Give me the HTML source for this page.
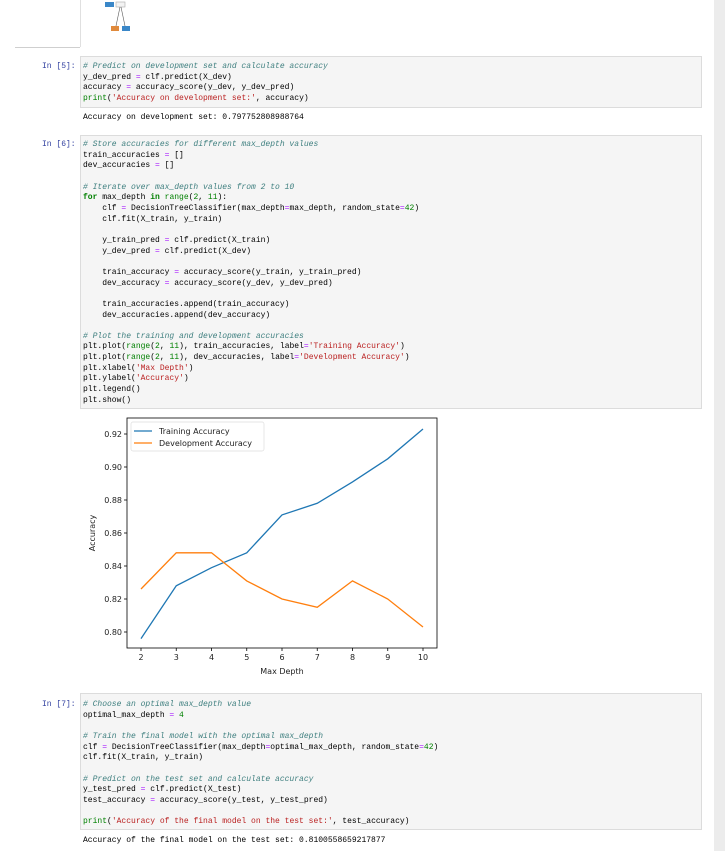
<!DOCTYPE html>
<html><head><meta charset="utf-8"><style>
body{margin:0;width:725px;height:851px;background:#fff;position:relative;overflow:hidden;font-family:"Liberation Mono",monospace;}
.sb{position:absolute;left:714px;top:0;width:11px;height:851px;background:#ececec;}
.box{position:absolute;left:80px;width:620px;background:#f5f5f5;border:1px solid #dcdcdc;}
.code{position:absolute;left:83px;font-size:8px;line-height:10.65px;white-space:pre;color:#000;}
.p{position:absolute;left:42px;font-size:8px;color:#303f9f;}
.out{position:absolute;left:83px;font-size:8px;white-space:pre;color:#000;}
.c{color:#408080;font-style:italic}.k{color:#008000;font-weight:bold}.b{color:#008000}.n{color:#008000}.s{color:#ba2121}.o{color:#aa22ff}
</style></head><body>
<div class="sb"></div>
<div style="position:absolute;left:15px;top:47px;width:65px;height:1px;background:#cfcfcf"></div>
<div style="position:absolute;left:80px;top:0;width:1px;height:47px;background:#e0e0e0"></div>
<svg style="position:absolute;left:100px;top:0" width="40" height="36">
<rect x="5" y="2" width="9" height="5" fill="#3a87c8"/><rect x="16" y="2" width="9" height="5" fill="#f3f3f3" stroke="#aaa" stroke-width=".6"/>
<line x1="20" y1="7" x2="16" y2="26" stroke="#555" stroke-width=".6"/><line x1="21" y1="7" x2="25" y2="26" stroke="#555" stroke-width=".6"/>
<rect x="11" y="26" width="8" height="5" fill="#e08a3c"/><rect x="22" y="26" width="8" height="5" fill="#3a87c8"/></svg>

<div class="box" style="top:56px;height:50px"></div>
<div class="p" style="top:62px">In [5]:</div>
<div class="code" style="top:62px"><span class="c"># Predict on development set and calculate accuracy</span>
y_dev_pred <span class="o">=</span> clf.predict(X_dev)
accuracy <span class="o">=</span> accuracy_score(y_dev, y_dev_pred)
<span class="b">print</span>(<span class="s">'Accuracy on development set:'</span>, accuracy)</div>
<div class="out" style="top:113px">Accuracy on development set: 0.797752808988764</div>

<div class="box" style="top:135px;height:272px"></div>
<div class="p" style="top:140px">In [6]:</div>
<div class="code" style="top:140px"><span class="c"># Store accuracies for different max_depth values</span>
train_accuracies <span class="o">=</span> []
dev_accuracies <span class="o">=</span> []

<span class="c"># Iterate over max_depth values from 2 to 10</span>
<span class="k">for</span> max_depth <span class="k">in</span> <span class="b">range</span>(<span class="n">2</span>, <span class="n">11</span>):
    clf <span class="o">=</span> DecisionTreeClassifier(max_depth<span class="o">=</span>max_depth, random_state<span class="o">=</span><span class="n">42</span>)
    clf.fit(X_train, y_train)

    y_train_pred <span class="o">=</span> clf.predict(X_train)
    y_dev_pred <span class="o">=</span> clf.predict(X_dev)

    train_accuracy <span class="o">=</span> accuracy_score(y_train, y_train_pred)
    dev_accuracy <span class="o">=</span> accuracy_score(y_dev, y_dev_pred)

    train_accuracies.append(train_accuracy)
    dev_accuracies.append(dev_accuracy)

<span class="c"># Plot the training and development accuracies</span>
plt.plot(<span class="b">range</span>(<span class="n">2</span>, <span class="n">11</span>), train_accuracies, label<span class="o">=</span><span class="s">'Training Accuracy'</span>)
plt.plot(<span class="b">range</span>(<span class="n">2</span>, <span class="n">11</span>), dev_accuracies, label<span class="o">=</span><span class="s">'Development Accuracy'</span>)
plt.xlabel(<span class="s">'Max Depth'</span>)
plt.ylabel(<span class="s">'Accuracy'</span>)
plt.legend()
plt.show()</div>

<svg style="position:absolute;left:0;top:410px" width="460" height="280" font-family="DejaVu Sans, sans-serif" font-size="8">
<g transform="translate(0,-410)">
<rect x="127" y="418" width="310" height="230" fill="none" stroke="#000" stroke-width=".8"/>
<g stroke="#000" stroke-width=".8">
<line x1="124" y1="434" x2="127" y2="434"/><line x1="124" y1="467" x2="127" y2="467"/><line x1="124" y1="500" x2="127" y2="500"/><line x1="124" y1="533" x2="127" y2="533"/><line x1="124" y1="566" x2="127" y2="566"/><line x1="124" y1="599" x2="127" y2="599"/><line x1="124" y1="632" x2="127" y2="632"/>
<line x1="141" y1="648" x2="141" y2="651"/><line x1="176.25" y1="648" x2="176.25" y2="651"/><line x1="211.5" y1="648" x2="211.5" y2="651"/><line x1="246.75" y1="648" x2="246.75" y2="651"/><line x1="282" y1="648" x2="282" y2="651"/><line x1="317.25" y1="648" x2="317.25" y2="651"/><line x1="352.5" y1="648" x2="352.5" y2="651"/><line x1="387.75" y1="648" x2="387.75" y2="651"/><line x1="423" y1="648" x2="423" y2="651"/>
</g>
<g text-anchor="end" fill="#222">
<text x="122" y="437">0.92</text><text x="122" y="470">0.90</text><text x="122" y="503">0.88</text><text x="122" y="536">0.86</text><text x="122" y="569">0.84</text><text x="122" y="602">0.82</text><text x="122" y="635">0.80</text></g>
<g text-anchor="middle" fill="#222">
<text x="141" y="660">2</text><text x="176.25" y="660">3</text><text x="211.5" y="660">4</text><text x="246.75" y="660">5</text><text x="282" y="660">6</text><text x="317.25" y="660">7</text><text x="352.5" y="660">8</text><text x="387.75" y="660">9</text><text x="423" y="660">10</text>
<text x="282" y="674">Max Depth</text>
<text transform="translate(95,533) rotate(-90)">Accuracy</text></g>
<polyline fill="none" stroke="#1f77b4" stroke-width="1.3" points="141,638.6 176.25,585.8 211.5,567.7 246.75,552.8 282,514.9 317.25,503.3 352.5,481.9 387.75,458.8 423,429"/>
<polyline fill="none" stroke="#ff7f0e" stroke-width="1.3" points="141,589 176.25,552.8 211.5,552.8 246.75,580.9 282,599 317.25,607.3 352.5,580.9 387.75,599 423,627"/>
<rect x="131" y="422" width="133" height="29" fill="#fff" stroke="#ddd" stroke-width=".7" rx="2"/>
<line x1="134" y1="431" x2="152" y2="431" stroke="#1f77b4" stroke-width="1.3"/>
<line x1="134" y1="443" x2="152" y2="443" stroke="#ff7f0e" stroke-width="1.3"/>
<text x="159" y="434" fill="#222">Training Accuracy</text>
<text x="159" y="446" fill="#222">Development Accuracy</text>
</g></svg>

<div class="box" style="top:693px;height:135px"></div>
<div class="p" style="top:700px">In [7]:</div>
<div class="code" style="top:700px"><span class="c"># Choose an optimal max_depth value</span>
optimal_max_depth <span class="o">=</span> <span class="n">4</span>

<span class="c"># Train the final model with the optimal max_depth</span>
clf <span class="o">=</span> DecisionTreeClassifier(max_depth<span class="o">=</span>optimal_max_depth, random_state<span class="o">=</span><span class="n">42</span>)
clf.fit(X_train, y_train)

<span class="c"># Predict on the test set and calculate accuracy</span>
y_test_pred <span class="o">=</span> clf.predict(X_test)
test_accuracy <span class="o">=</span> accuracy_score(y_test, y_test_pred)

<span class="b">print</span>(<span class="s">'Accuracy of the final model on the test set:'</span>, test_accuracy)</div>
<div class="out" style="top:836px">Accuracy of the final model on the test set: 0.8100558659217877</div>
</body></html>
